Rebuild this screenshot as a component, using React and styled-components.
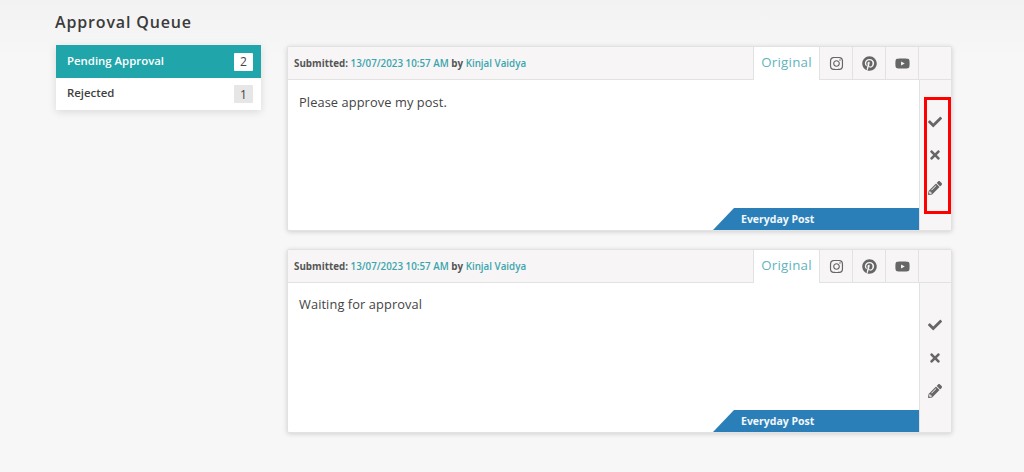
import styled, { createGlobalStyle } from 'styled-components';
import { FaCheck, FaTimes, FaPencilAlt, FaInstagram, FaPinterest, FaYoutube } from 'react-icons/fa';

const Global = createGlobalStyle`
  html, body { margin: 0; padding: 0; background: #f6f6f6; }
  body { font-family: "Open Sans", "Liberation Sans", sans-serif; color: #444; }
`;

const Page = styled.div`
  width: 1024px;
  height: 472px;
  box-sizing: border-box;
  padding: 11px 72px 0 56px;
  overflow: hidden;
  background: linear-gradient(#f2f2f2, #f7f7f7 60px);
`;

const Heading = styled.h1`
  margin: 0 0 12px -1px;
  font-size: 16px;
  line-height: 22px;
  font-weight: 600;
  letter-spacing: 0.85px;
  color: #3b3b3b;
`;

const Columns = styled.div`
  display: flex;
  align-items: flex-start;
  gap: 26px;
`;

const Sidebar = styled.ul`
  list-style: none;
  margin: 0;
  padding: 0;
  width: 205px;
  flex: none;
  background: #fff;
  box-shadow: 0 2px 8px rgba(0, 0, 0, 0.12);
`;

const SideItem = styled.li`
  display: flex;
  align-items: center;
  justify-content: space-between;
  height: ${p => (p.$active ? '33px' : '32px')};
  padding: 0 8px 0 11px;
  font-size: 11.4px;
  font-weight: 600;
  color: ${p => (p.$active ? '#fff' : '#3f3f3f')};
  background: ${p => (p.$active ? '#20a5ab' : '#fff')};
`;

const SideLabel = styled.span`
  position: relative;
  top: ${p => (p.$active ? '-1px' : '-2px')};
`;

const Count = styled.span`
  width: 19px;
  height: 18px;
  display: flex;
  align-items: center;
  justify-content: center;
  border-radius: 1px;
  font-size: 12px;
  font-weight: 400;
  color: #444;
  background: ${p => (p.$active ? '#fff' : '#e6e6e6')};
`;

const Queue = styled.div`
  flex: 1;
  display: flex;
  flex-direction: column;
  gap: 18px;
  margin-top: 1px;
`;

const Card = styled.article`
  position: relative;
  height: ${p => p.$height}px;
  box-sizing: border-box;
  display: flex;
  flex-direction: column;
  background: #fff;
  border: 1px solid #e2e2e2;
  border-radius: 2px;
  box-shadow: 0 1px 5px rgba(0, 0, 0, 0.16);
`;

const Header = styled.header`
  display: flex;
  align-items: stretch;
  height: 32px;
  flex: none;
  background: #f7f5f6;
  border-bottom: 1px solid #e2e2e2;
`;

const Meta = styled.div`
  flex: 1;
  display: flex;
  align-items: center;
  gap: 2.6px;
  padding-left: 6px;
  font-size: 9.8px;
  font-weight: 700;
  color: #555;
  white-space: pre;
`;

const Teal = styled.span`
  color: #3ba5ad;
  font-weight: 600;
`;

const OriginalTab = styled.div`
  width: 67px;
  margin-bottom: -1px;
  display: flex;
  align-items: center;
  justify-content: center;
  padding-bottom: 3px;
  box-sizing: border-box;
  font-size: 13.3px;
  letter-spacing: 0.25px;
  color: #5fb4bd;
  background: #fff;
  border-left: 1px solid #e2e2e2;
  border-right: 1px solid #e2e2e2;
`;

const IconTab = styled.div`
  width: 32px;
  flex: none;
  display: flex;
  align-items: center;
  justify-content: center;
  color: #666;
  font-size: 15px;
  border-right: 1px solid #e2e2e2;
`;

const BlankTab = styled.div`
  width: 32px;
  flex: none;
`;

const Body = styled.div`
  flex: 1;
  display: flex;
  min-height: 0;
`;

const Content = styled.div`
  flex: 1;
  display: flex;
  flex-direction: column;
  justify-content: space-between;
`;

const Message = styled.p`
  margin: 0;
  padding: ${p => p.$top}px 11px 13px;
  font-size: 12.8px;
  line-height: 18px;
  letter-spacing: 0.1px;
  color: #444;
`;

const Ribbon = styled.div`
  align-self: flex-end;
  width: 206px;
  height: 22px;
  box-sizing: border-box;
  padding-left: 28px;
  display: flex;
  align-items: center;
  font-size: 10.5px;
  font-weight: 700;
  color: #f2f7fb;
  background: #2a7fb8;
  clip-path: polygon(21px 0, 100% 0, 100% 100%, 0 100%);
`;

const Actions = styled.aside`
  width: 32px;
  flex: none;
  box-sizing: border-box;
  padding: 35px 1px 0 0;
  display: flex;
  flex-direction: column;
  align-items: center;
  gap: 19px;
  color: #666;
  font-size: 14px;
  background: #f7f5f6;
  border-left: 1px solid #e2e2e2;
`;

const Highlight = styled.div`
  position: absolute;
  left: 636px;
  top: 50px;
  width: 21px;
  height: 111px;
  border: 3px solid #f00;
  pointer-events: none;
`;

const posts = [
  { message: 'Please approve my post.', height: 185, top: 13, marked: true },
  { message: 'Waiting for approval', height: 184, top: 12 },
];

function Post({ message, height, top, marked }) {
  return (
    <Card $height={height}>
      <Header>
        <Meta>
          <span>Submitted:</span>
          <Teal>13/07/2023 10:57 AM</Teal>
          <span>by</span>
          <Teal>Kinjal Vaidya</Teal>
        </Meta>
        <OriginalTab>Original</OriginalTab>
        <IconTab><FaInstagram /></IconTab>
        <IconTab><FaPinterest /></IconTab>
        <IconTab><FaYoutube /></IconTab>
        <BlankTab />
      </Header>
      <Body>
        <Content>
          <Message $top={top}>{message}</Message>
          <Ribbon>Everyday Post</Ribbon>
        </Content>
        <Actions>
          <FaCheck />
          <FaTimes />
          <FaPencilAlt />
        </Actions>
      </Body>
      {marked && <Highlight />}
    </Card>
  );
}

export default function App() {
  return (
    <Page>
      <Global />
      <Heading>Approval Queue</Heading>
      <Columns>
        <Sidebar>
          <SideItem $active>
            <SideLabel $active>Pending Approval</SideLabel>
            <Count $active>2</Count>
          </SideItem>
          <SideItem>
            <SideLabel>Rejected</SideLabel>
            <Count>1</Count>
          </SideItem>
        </Sidebar>
        <Queue>
          {posts.map(post => <Post key={post.message} {...post} />)}
        </Queue>
      </Columns>
    </Page>
  );
}
